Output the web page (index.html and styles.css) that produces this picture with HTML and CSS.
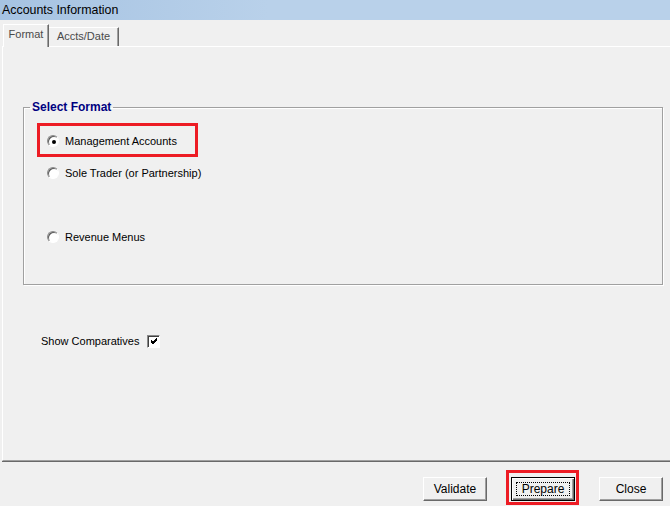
FILE: index.html
```html
<!DOCTYPE html>
<html>
<head>
<meta charset="utf-8">
<link rel="stylesheet" href="styles.css">
</head>
<body>
<div class="title">Accounts Information</div>
<div class="tabs">
  <div class="tab active">Format</div>
  <div class="tab second">Accts/Date</div>
</div>
<div class="panel">
  <fieldset class="group">
    <legend>Select Format</legend>
    <div class="opt">
      <span class="hl"></span>
      <span class="radio checked"></span><span class="lbl">Management Accounts</span>
    </div>
    <div class="opt">
      <span class="radio"></span><span class="lbl">Sole Trader (or Partnership)</span>
    </div>
    <div class="opt gap">
      <span class="radio"></span><span class="lbl">Revenue Menus</span>
    </div>
  </fieldset>
  <div class="comp">
    <span class="comp-lbl">Show Comparatives</span>
    <span class="check"><svg width="9" height="9" viewBox="0 0 9 9"><path d="M1 4 L3 6 L7 2 M1 5 L3 7 L7 3 M1 3 L3 5 L7 1" stroke="#000" stroke-width="1" fill="none"/></svg></span>
  </div>
</div>
<div class="footer">
  <div class="btn">Validate</div>
  <div class="btnwrap">
    <span class="hl2"></span>
    <div class="btn default"><span class="focus">Prepare</span></div>
  </div>
  <div class="btn">Close</div>
</div>
</body>
</html>
```

FILE: styles.css
```css
html, body {
  margin: 0;
  padding: 0;
}
body {
  width: 670px;
  height: 506px;
  overflow: hidden;
  background: #f0f0f0;
  font-family: "Liberation Sans", Arial, sans-serif;
  font-size: 11px;
  color: #000;
}
.title {
  height: 20px;
  line-height: 20px;
  padding-left: 2px;
  font-size: 12.4px;
  background: linear-gradient(to right, #a6c3e2, #b9d1ea 40%, #b9d1ea);
  color: #000;
}
.tabs {
  height: 26px;
  box-sizing: border-box;
  display: flex;
  align-items: flex-end;
  padding-left: 3px;
}
.tab {
  box-sizing: border-box;
  height: 19px;
  line-height: 17px;
  text-align: center;
  border-top: 1px solid #fff;
  border-left: 1px solid #fff;
  border-right: 1px solid #696969;
  box-shadow: inset -1px 0 0 #a0a0a0;
  color: #4a4a4a;
  background: #f0f0f0;
}
.tab.active {
  width: 46px;
  height: 23px;
  line-height: 19px;
  margin-bottom: -1px;
  position: relative;
  z-index: 1;
}
.tab.second {
  width: 70px;
  border-left: none;
}
.panel {
  margin-left: 2px;
  height: 413px;
  border-top: 1px solid #fff;
  border-left: 1px solid #fff;
  border-bottom: 1px solid #a0a0a0;
  box-shadow: 0 1px 0 #696969;
  overflow: hidden;
  padding-top: 53px;
  box-sizing: content-box;
  height: 360px;
}
.group {
  margin: 0 7px 0 20px;
  padding: 11px 0 31px 0;
  border: 1px solid #a0a0a0;
  box-shadow: 1px 1px 0 #fff, inset 1px 1px 0 #fff;
}
.group legend {
  margin-left: 6px;
  padding: 0 2px;
  line-height: 14px;
  font-size: 12px;
  font-weight: bold;
  color: #000080;
}
.opt {
  position: relative;
  height: 32px;
  display: flex;
  align-items: center;
  padding-left: 23px;
}
.opt.gap {
  margin-top: 32px;
}
.hl {
  position: absolute;
  left: 13px;
  top: -2px;
  width: 161px;
  height: 34px;
  box-sizing: border-box;
  border: 3px solid #ed1c24;
}
.radio {
  width: 12px;
  height: 12px;
  box-sizing: border-box;
  border-radius: 50%;
  border: 1px solid;
  border-color: #8a8a8a #fff #fff #8a8a8a;
  box-shadow: inset 1px 1px 0 #5a5a5a;
  background: #fff;
  display: flex;
  align-items: center;
  justify-content: center;
}
.radio.checked::after {
  content: "";
  width: 4px;
  height: 4px;
  border-radius: 50%;
  background: #000;
  margin: 1px 0 0 1px;
}
.lbl {
  margin-left: 6px;
}
.comp {
  margin: 46px 0 0 38px;
  height: 20px;
  display: flex;
  align-items: center;
}
.comp-lbl {
  width: 106px;
}
.check {
  width: 13px;
  height: 13px;
  box-sizing: border-box;
  border: 1px solid;
  border-color: #8a8a8a #fff #fff #8a8a8a;
  box-shadow: inset 1px 1px 0 #404040;
  background: #fff;
  display: flex;
  align-items: center;
  justify-content: center;
  padding: 1px 0 0 1px;
}
.check svg {
  display: block;
}
.footer {
  height: 45px;
  box-sizing: border-box;
  display: flex;
  justify-content: flex-end;
  align-items: flex-start;
  gap: 24px;
  padding: 16px 7px 0 0;
}
.btnwrap {
  position: relative;
}
.btn {
  width: 64px;
  height: 24px;
  box-sizing: border-box;
  border: 1px solid;
  border-color: #fff #696969 #696969 #fff;
  box-shadow: inset -1px -1px 0 #a0a0a0;
  background: #f0f0f0;
  display: flex;
  align-items: center;
  justify-content: center;
  font-size: 12px;
}
.btn.default {
  border: 1px solid #000;
  box-shadow: inset 1px 1px 0 #fff, inset -1px -1px 0 #696969, inset -2px -2px 0 #a0a0a0;
  padding: 4px;
}
.focus {
  flex: 1;
  align-self: stretch;
  border: 1px dotted #000;
  display: flex;
  align-items: center;
  justify-content: center;
}
.hl2 {
  position: absolute;
  left: -5px;
  top: -7px;
  width: 73px;
  height: 35px;
  box-sizing: border-box;
  border: 3px solid #ed1c24;
}
```
